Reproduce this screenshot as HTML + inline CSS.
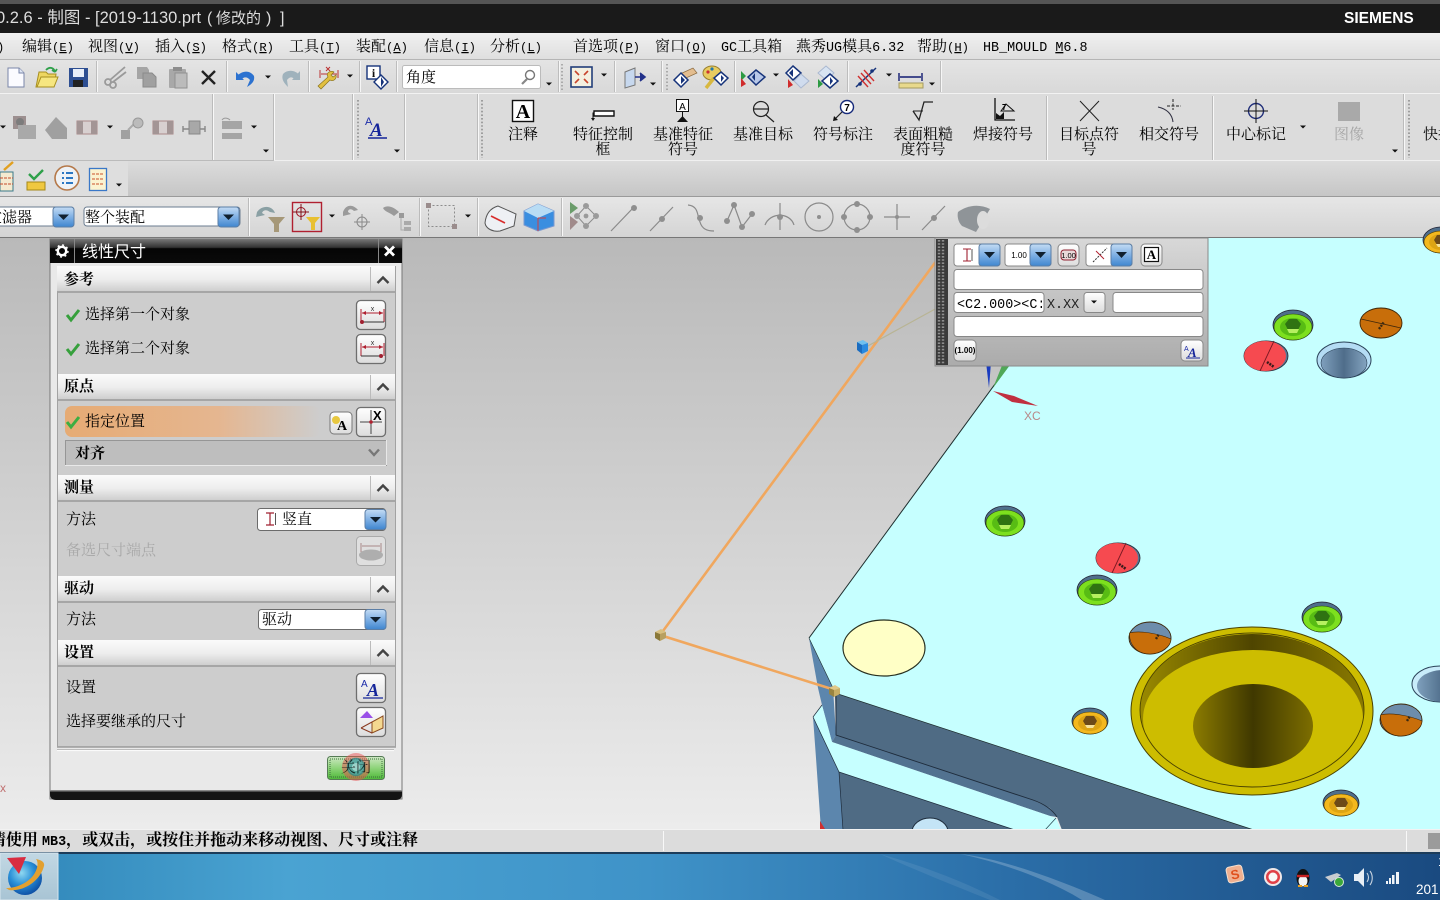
<!DOCTYPE html>
<html><head><meta charset="utf-8"><title>NX 制图</title>
<style>
html,body{margin:0;padding:0;width:1440px;height:900px;overflow:hidden;background:#ddd}
svg{display:block;position:absolute;left:0;top:0}
text{font-family:"Noto Serif CJK SC","Noto Sans CJK SC",serif;font-size:15px;fill:#000}
.l{font-family:"Liberation Mono",monospace;font-size:12.2px}
.l2{font-family:"Liberation Mono",monospace;font-size:13.4px}
.u{text-decoration:underline}
.c{text-anchor:middle}
.b{font-weight:700}
</style></head><body>
<svg width="1440" height="900" viewBox="0 0 1440 900" xmlns="http://www.w3.org/2000/svg">
<defs>
<linearGradient id="vp" x1="0" y1="0" x2="0" y2="1"><stop offset="0" stop-color="#b9b9b9"/><stop offset=".45" stop-color="#d0d0d0"/><stop offset="1" stop-color="#ececec"/></linearGradient>
<linearGradient id="menu" x1="0" y1="0" x2="0" y2="1"><stop offset="0" stop-color="#f0f0f0"/><stop offset="1" stop-color="#dedede"/></linearGradient>
<linearGradient id="r1" x1="0" y1="0" x2="0" y2="1"><stop offset="0" stop-color="#e4e4e4"/><stop offset="1" stop-color="#d8d8d8"/></linearGradient>
<linearGradient id="r3" x1="0" y1="0" x2="0" y2="1"><stop offset="0" stop-color="#dcdcdc"/><stop offset="1" stop-color="#c6c6c6"/></linearGradient>
<linearGradient id="r4" x1="0" y1="0" x2="0" y2="1"><stop offset="0" stop-color="#e6e6e6"/><stop offset="1" stop-color="#d4d4d4"/></linearGradient>
<linearGradient id="tb" x1="0" y1="0" x2="0" y2="1"><stop offset="0" stop-color="#777"/><stop offset=".35" stop-color="#333"/><stop offset=".4" stop-color="#050505"/><stop offset="1" stop-color="#0a0a0a"/></linearGradient>
<linearGradient id="hd" x1="0" y1="0" x2="0" y2="1"><stop offset="0" stop-color="#fbfbfb"/><stop offset=".5" stop-color="#eeeeee"/><stop offset="1" stop-color="#cccccc"/></linearGradient>
<linearGradient id="blue" x1="0" y1="0" x2="0" y2="1"><stop offset="0" stop-color="#c4dcf4"/><stop offset=".5" stop-color="#7fb0e4"/><stop offset="1" stop-color="#3f86cf"/></linearGradient>
<linearGradient id="bt" x1="0" y1="0" x2="0" y2="1"><stop offset="0" stop-color="#ffffff"/><stop offset="1" stop-color="#dcdcdc"/></linearGradient>
<linearGradient id="org" x1="0" y1="0" x2="1" y2="0"><stop offset="0" stop-color="#e6ab74"/><stop offset=".6" stop-color="#e5b690"/><stop offset="1" stop-color="#cdcdcd"/></linearGradient>
<linearGradient id="pop" x1="0" y1="0" x2="0" y2="1"><stop offset="0" stop-color="#d8d8d8"/><stop offset="1" stop-color="#ababab"/></linearGradient>
<linearGradient id="grn" x1="0" y1="0" x2="0" y2="1"><stop offset="0" stop-color="#cfe8c4"/><stop offset=".5" stop-color="#8ed47a"/><stop offset="1" stop-color="#4db838"/></linearGradient>
<linearGradient id="hole" x1="0" y1="0" x2="1" y2="0"><stop offset="0" stop-color="#8c7c00"/><stop offset=".5" stop-color="#3f3800"/><stop offset="1" stop-color="#7d6e00"/></linearGradient>
<linearGradient id="cres" x1="0" y1="0" x2="1" y2="0"><stop offset="0" stop-color="#9a8a00"/><stop offset=".5" stop-color="#4f4500"/><stop offset="1" stop-color="#8a7a00"/></linearGradient>
<linearGradient id="bh" x1="0" y1="0" x2="1" y2="0"><stop offset="0" stop-color="#7fa0bd"/><stop offset=".5" stop-color="#4f6d8a"/><stop offset="1" stop-color="#84a4c0"/></linearGradient>
<linearGradient id="task" x1="0" y1="0" x2="1" y2="0"><stop offset="0" stop-color="#2f86b8"/><stop offset=".2" stop-color="#4aa3d2"/><stop offset=".45" stop-color="#3f93c8"/><stop offset=".7" stop-color="#2b6ea8"/><stop offset="1" stop-color="#1a4a80"/></linearGradient>
<linearGradient id="start" x1="0" y1="0" x2="0" y2="1"><stop offset="0" stop-color="#c2d8e4"/><stop offset="1" stop-color="#a8c4d4"/></linearGradient>
<radialGradient id="globe" cx=".4" cy=".35" r=".7"><stop offset="0" stop-color="#8fd8f0"/><stop offset=".5" stop-color="#2a90d8"/><stop offset="1" stop-color="#0b4aa0"/></radialGradient>

<g id="da"><path d="M-3 -1.5H3L0 1.5Z" fill="#111"/></g>
<g id="cb"><rect width="21" height="20" rx="3" fill="url(#blue)" stroke="#5b7ea6"/><path d="M5 7.5H16L10.5 13Z" fill="#10202f"/></g>
<g id="dbtn"><rect x=".5" y=".5" width="29" height="29" rx="4" fill="url(#bt)" stroke="#6e6e6e" stroke-width="1.3"/></g>
<g id="chev"><path d="M-5.5 3L0 -2.5 5.5 3" fill="none" stroke="#444" stroke-width="2.4"/></g>

<g id="sgreen"><ellipse rx="20" ry="15" fill="#4f6f8c" stroke="#223" stroke-width=".8"/><ellipse cy="2" rx="19" ry="13" fill="#7de01e" stroke="#2c4a10" stroke-width=".6"/><ellipse cy="2" rx="13" ry="9" fill="#58bc14"/><path d="M-8 -1L-4 -6H4L8 -1 5 5H-5Z" fill="#2f7312"/><path d="M-6 4H6L4 8H-4Z" fill="#b6f060"/></g>
<g id="syellow"><ellipse rx="18" ry="13" fill="#4f6f8c" stroke="#223" stroke-width=".8"/><ellipse cy="2" rx="17" ry="11" fill="#f4b81e" stroke="#5a4400" stroke-width=".6"/><ellipse cy="2" rx="12" ry="8" fill="#dda414"/><path d="M-7 0L-4 -5H4L7 0 4 5H-4Z" fill="#6d4a18"/><path d="M-5 4H5L3 7H-3Z" fill="#f6e29a"/></g>
<g id="sorange"><ellipse rx="21" ry="15" fill="#c86e0a" stroke="#3d2608" stroke-width=".9"/><path d="M-20 -4L20 5" stroke="#41280a" stroke-width=".8"/><path d="M-2 6L3 -1" stroke="#3c2a12" stroke-width="2.4" stroke-dasharray="2 1"/></g>
<g id="sorange2"><ellipse rx="21" ry="16" fill="#6d8dac" stroke="#3d2608" stroke-width=".9"/><path d="M-20.500 -5C-10 -8 10 -4 21 1 21 9 10 16 0 16 -14 16 -21 6 -20.500 -5Z" fill="#c86e0a" stroke="#3d2608" stroke-width=".6"/><path d="M6 1L9 -4" stroke="#3c2a12" stroke-width="2.400" stroke-dasharray="2 1"/></g>
<g id="sred"><ellipse rx="22" ry="15" fill="#567894" stroke="#2a3240" stroke-width=".9"/><ellipse cx="-1" rx="21" ry="15" fill="#f64a50"/><path d="M-6 15L8 -15" stroke="#7a1822" stroke-width=".9"/><path d="M1 6L8 11" stroke="#3a1a1a" stroke-width="2.6" stroke-dasharray="2 1"/></g>
</defs>

<!-- base bars -->
<rect width="1440" height="4" fill="#555"/>
<rect y="4" width="1440" height="29" fill="#1a1a1a"/>
<rect y="33" width="1440" height="27" fill="url(#menu)"/>
<rect y="59" width="1440" height="1" fill="#b5b5b5"/>
<rect y="60" width="1440" height="34" fill="url(#r1)"/>
<rect y="93" width="1440" height="1" fill="#f2f2f2"/>
<rect y="94" width="1440" height="67" fill="#dcdcdc"/>
<rect y="161" width="1440" height="35" fill="url(#r3)"/>
<rect y="160" width="1440" height="1" fill="#f0f0f0"/>
<rect y="161" width="128" height="35" fill="#dedede"/>
<rect y="196" width="1440" height="1" fill="#9a9a9a"/>
<rect y="197" width="1440" height="41" fill="url(#r4)"/>

<!-- title -->
<g style="fill:#ddd">
<text x="-4" y="23" style="font-family:'Liberation Sans','Noto Sans CJK SC',sans-serif;font-size:16.5px;fill:#ddd">0.2.6 - 制图 - [2019-1130.prt</text>
<text x="207" y="23" style="font-family:'Liberation Sans',sans-serif;font-size:16px;fill:#ddd">(</text>
<text x="216" y="23" style="font-family:'Noto Sans CJK SC',sans-serif;font-size:15px;fill:#ddd">修改的</text>
<text x="266" y="23" style="font-family:'Liberation Sans',sans-serif;font-size:16px;fill:#ddd">)</text>
<text x="280" y="23" style="font-family:'Liberation Sans',sans-serif;font-size:16px;fill:#ddd">]</text>
</g>
<text x="1344" y="23" class="b" style="font-family:'Liberation Sans',sans-serif;font-size:15.5px;fill:#fff">SIEMENS</text>

<!-- menu -->
<g>
<text x="-3" y="51"><tspan class="l">)</tspan></text>
<text x="22" y="51">编辑<tspan class="l">(<tspan class="u">E</tspan>)</tspan></text>
<text x="88" y="51">视图<tspan class="l">(<tspan class="u">V</tspan>)</tspan></text>
<text x="155" y="51">插入<tspan class="l">(<tspan class="u">S</tspan>)</tspan></text>
<text x="222" y="51">格式<tspan class="l">(<tspan class="u">R</tspan>)</tspan></text>
<text x="289" y="51">工具<tspan class="l">(<tspan class="u">T</tspan>)</tspan></text>
<text x="356" y="51">装配<tspan class="l">(<tspan class="u">A</tspan>)</tspan></text>
<text x="424" y="51">信息<tspan class="l">(<tspan class="u">I</tspan>)</tspan></text>
<text x="490" y="51">分析<tspan class="l">(<tspan class="u">L</tspan>)</tspan></text>
<text x="573" y="51">首选项<tspan class="l">(<tspan class="u">P</tspan>)</tspan></text>
<text x="655" y="51">窗口<tspan class="l">(<tspan class="u">O</tspan>)</tspan></text>
<text x="721" y="51"><tspan class="l2">GC</tspan>工具箱</text>
<text x="796" y="51">燕秀<tspan class="l2">UG</tspan>模具<tspan class="l2">6.32</tspan></text>
<text x="917" y="51">帮助<tspan class="l">(<tspan class="u">H</tspan>)</tspan></text>
<text x="983" y="51"><tspan class="l2">HB_MOULD <tspan class="u">M</tspan>6.8</tspan></text>
</g>

<!-- row 1 separators -->
<g stroke="#bdbdbd"><path d="M96.5 61V92M226.5 61V92M308.5 61V92M359.5 61V92M396.5 61V92M558.5 61V92M614.5 61V92M661.5 61V92M734.5 61V92M847.5 61V92M940.5 61V92"/></g>
<g stroke="#f6f6f6"><path d="M97.5 61V92M227.5 61V92M309.5 61V92M360.5 61V92M397.5 61V92M559.5 61V92M615.5 61V92M662.5 61V92M735.5 61V92M848.5 61V92M941.5 61V92"/></g>
<!-- row 1 icons -->
<path d="M8 68H19L24 73V87H8Z" fill="#fbfbff" stroke="#7a86a8"/><path d="M19 68V73H24" fill="#dfe6f5" stroke="#7a86a8"/>
<path d="M36 87L39 72H46L48 74H56L54 87Z" fill="#eed660" stroke="#a78f20"/><path d="M37 87L41 77H58L54 87Z" fill="#f6e680" stroke="#a78f20"/><path d="M46 70C50 66 54 68 55 72M55 72L52 70M55 72L57 69" fill="none" stroke="#2fa04a" stroke-width="1.8"/>
<rect x="69" y="68" width="19" height="19" fill="#2e4f92"/><rect x="73" y="69" width="11" height="8" fill="#e8eef8"/><rect x="73" y="80" width="10" height="7" fill="#222"/>
<g fill="none" stroke="#9a9a9a" stroke-width="1.8"><circle cx="108" cy="82" r="3"/><circle cx="113" cy="85" r="3"/><path d="M110 80L125 67M113 82L126 72"/></g>
<path d="M137 67H147L149 70V79H137Z" fill="#a5a5a5"/><path d="M143 73H152L156 77V87H143Z" fill="#a0a0a0" stroke="#8a8a8a"/>
<rect x="169" y="69" width="17" height="19" rx="1" fill="#a8a8a8"/><rect x="173" y="67" width="9" height="4" fill="#8d8d8d"/><rect x="175" y="73" width="12" height="15" fill="#bbb" stroke="#909090"/>
<path d="M202 71L215 84M215 71L202 84" stroke="#222" stroke-width="2.4"/>
<path d="M236 77C242 70 250 70 254 76 255 81 252 84 247 87L250 80C247 76 243 77 241 80Z" fill="#2c72d0"/><path d="M236 72V80H244Z" fill="#2c72d0"/>
<use href="#da" x="268" y="77"/>
<path d="M300 76C296 70 288 69 283 74 281 79 284 83 288 87L287 80C290 76 293 77 295 80Z" fill="#9fb2bc"/><path d="M300 71V80H292Z" fill="#9fb2bc"/>
<g fill="none"><path d="M320 70V78M338 70V78M321 74H337" stroke="#b33" stroke-width="1"/></g><path d="M326 67L330 71M330 67L326 71" stroke="#b33"/><path d="M318 90L328 81C325 77 331 74 334 76L331 79 333 81 336 79C337 83 333 86 330 84L321 93Z" fill="#e2c040" stroke="#8a7420" stroke-width=".7" transform="translate(0,-4)"/>
<use href="#da" x="350" y="76"/>
<rect x="367" y="66" width="13" height="13" fill="#fff" stroke="#16337a" stroke-width="1.4"/><text x="373.5" y="77" class="c b" style="font-family:'Liberation Serif',serif;font-size:12px;fill:#111">i</text><path d="M381 75L388 82 381 89 374 82Z" fill="#fff" stroke="#16337a" stroke-width="1.4"/><path d="M381 77L384 82 381 87Z" fill="#16337a"/>
<rect x="402.5" y="65.5" width="138" height="23" rx="2" fill="#fff" stroke="#bbb"/>
<text x="406" y="82">角度</text>
<circle cx="530" cy="75" r="4.5" fill="#fff" stroke="#777" stroke-width="1.4"/><path d="M527 79L522 84" stroke="#888" stroke-width="2.2"/>
<use href="#da" x="549" y="84"/>
<rect x="571" y="67" width="21" height="20" fill="#f4f0e0" stroke="#223e7a" stroke-width="1.6"/><path d="M575 71L579 75M588 71L584 75M575 83L579 79M588 83L584 79" stroke="#c8452c" stroke-width="1.6"/>
<use href="#da" x="604" y="75"/>
<path d="M625 72L635 68V85L625 88Z" fill="#c7d8ee" stroke="#777"/><path d="M635 77H644M640 73L645 77 640 81" fill="#22318a" stroke="#22318a" stroke-width="1.6"/>
<use href="#da" x="653" y="84"/>
<path d="M562 64V90" stroke="#999" stroke-width="1.5" stroke-dasharray="1.5 2"/>
<path d="M667 64V90" stroke="#999" stroke-width="1.5" stroke-dasharray="1.5 2"/>
<path d="M680 74L693 68 697 73 686 78Z" fill="#e3bd8f" stroke="#8a6a40" stroke-width=".7"/><path d="M681 73L688 80 681 87 674 80Z" fill="#fff" stroke="#16337a" stroke-width="1.5"/><path d="M681 76L685 80 681 84Z" fill="#16337a"/>
<ellipse cx="712" cy="73" rx="9" ry="7" fill="#e8cc60" stroke="#9a8030"/><circle cx="708" cy="72" r="1.6" fill="#c33"/><circle cx="712" cy="69" r="1.6" fill="#27a"/><path d="M706 88L714 78" stroke="#d8b840" stroke-width="3.5"/><path d="M721 72L728 78 721 85 714 78Z" fill="#fff" stroke="#16337a" stroke-width="1.5"/><path d="M721 75L724 78 721 82Z" fill="#16337a"/>
<path d="M741 71L746 76 741 81Z" fill="#2c9a42"/><path d="M741 78L746 84 741 87Z" fill="#d02c2c"/><path d="M756 70L765 77 756 85 748 77Z" fill="#b8c8e8" stroke="#16337a" stroke-width="1.5"/><path d="M755 73L752 77 755 81Z" fill="#16337a"/>
<use href="#da" x="776" y="75"/>
<path d="M793 66L801 73 793 80 786 73Z" fill="#fff" stroke="#16337a" stroke-width="1.5"/><path d="M793 69L789 73 793 77Z" fill="#16337a"/><path d="M788 79L793 85 788 88Z" fill="#d02c2c"/><path d="M801 74L809 81 801 88 794 81Z" fill="#d0dcee" stroke="#aab8d0"/>
<path d="M826 66L834 73 826 80 818 73Z" fill="#d8e4f2" stroke="#aab8d0"/><path d="M818 79L823 84 818 88Z" fill="#2c9a42"/><path d="M830 74L838 81 830 88 822 81Z" fill="#fff" stroke="#16337a" stroke-width="1.5"/><path d="M830 77L833 81 830 85Z" fill="#16337a"/>
<path d="M856 87L876 68" stroke="#16337a" stroke-width="1.5"/><circle cx="860" cy="84" r="1.8" fill="#16337a"/><circle cx="872" cy="71" r="1.8" fill="#16337a"/><path d="M858 76L868 87M861 73L871 84M864 70L874 81" stroke="#d03030" stroke-width="1.4"/>
<use href="#da" x="889" y="75"/>
<path d="M899 73V81M922 73V81M900 77H921" stroke="#111a70" stroke-width="1.4"/><rect x="899" y="83" width="24" height="5" fill="#e8d98c" stroke="#a59a60"/>
<use href="#da" x="932" y="84"/>

<!-- row 2 -->
<g stroke="#bbb"><path d="M212.5 94V160M273.5 94V160M352.5 94V160M404.5 94V160M477.5 94V160M1046.5 96V160M1212.5 96V160M1403.5 94V160"/></g>
<g stroke="#f8f8f8"><path d="M213.5 94V160M274.5 94V160M353.5 94V160M405.5 94V160M478.5 94V160M1047.5 96V160M1213.5 96V160M1404.5 94V160"/></g>
<path d="M358 100V158M482 100V158M1409 100V158" stroke="#8f8f8f" stroke-width="1.6" stroke-dasharray="1.6 2"/>
<rect y="160" width="274" height="1" fill="#bbb"/>
<use href="#da" x="3" y="127"/>
<rect x="13" y="116" width="13" height="13" fill="#9c8f8f"/><circle cx="20" cy="122" r="4" fill="#7c7c7c"/><rect x="18" y="125" width="18" height="14" fill="#a9a9a9"/>
<path d="M45 130L56 117 67 128V139H52Z" fill="#a0a0a0"/>
<rect x="77" y="121" width="20" height="13" fill="#d8d0d0" stroke="#a88"/><path d="M77 121H83V134H77ZM91 121H97V134H91Z" fill="#a39595"/>
<use href="#da" x="110" y="127"/>
<rect x="121" y="130" width="9" height="9" fill="#a0a0a0"/><path d="M128 130L136 122" stroke="#aaa" stroke-width="2"/><circle cx="138" cy="123" r="5" fill="#bbb" stroke="#999"/>
<rect x="153" y="121" width="20" height="13" fill="#d8d0d0" stroke="#a88"/><path d="M153 121H159V134H153ZM167 121H173V134H167Z" fill="#a39595"/>
<rect x="189" y="121" width="11" height="13" fill="#a8a8a8" stroke="#888"/><path d="M183 132V126M205 132V126M183 129H189M200 129H205" stroke="#888" stroke-width="1.4"/>
<rect x="222" y="121" width="20" height="8" fill="#a5a5a5"/><rect x="222" y="133" width="20" height="6" fill="#a5a5a5"/><path d="M222 120C224 117 228 118 230 120" fill="none" stroke="#999"/>
<use href="#da" x="254" y="127"/>
<use href="#da" x="266" y="151"/>
<text x="365" y="125" style="font-family:'Liberation Sans',sans-serif;font-size:11px;fill:#1a2aa8">A</text>
<text x="370" y="136" class="b" style="font-family:'Liberation Serif',serif;font-size:19px;font-style:italic;fill:#15259a">A</text><path d="M368 138H387" stroke="#15259a" stroke-width="1.4"/>
<use href="#da" x="397" y="151"/>

<!-- labels -->
<text x="523" y="139" class="c">注释</text>
<text x="603" y="139" class="c">特征控制</text><text x="603" y="154" class="c">框</text>
<text x="683" y="139" class="c">基准特征</text><text x="683" y="154" class="c">符号</text>
<text x="763" y="139" class="c">基准目标</text>
<text x="843" y="139" class="c">符号标注</text>
<text x="923" y="139" class="c">表面粗糙</text><text x="923" y="154" class="c">度符号</text>
<text x="1003" y="139" class="c">焊接符号</text>
<text x="1089" y="139" class="c">目标点符</text><text x="1089" y="154" class="c">号</text>
<text x="1169" y="139" class="c">相交符号</text>
<text x="1256" y="139" class="c">中心标记</text>
<text x="1349" y="139" class="c" style="fill:#a6a6a6">图像</text>
<text x="1423" y="139">快捷</text>
<!-- ribbon icons -->
<rect x="512.5" y="100.5" width="21" height="21" fill="#fff" stroke="#111" stroke-width="1.4"/><text x="523" y="118" class="c b" style="font-family:'Liberation Serif',serif;font-size:20px">A</text>
<path d="M594 111H614V116H594Z" fill="#fff" stroke="#111" stroke-width="1.4"/><path d="M594 113H593V119" fill="none" stroke="#111"/><path d="M591 118H595L593 121Z" fill="#111"/>
<rect x="676.5" y="99.5" width="12" height="12" fill="#fff" stroke="#111"/><text x="682.5" y="110" class="c" style="font-family:'Liberation Sans',sans-serif;font-size:10px">A</text><path d="M682.5 112V118" stroke="#111"/><path d="M677 122H688L682.5 116Z" fill="#111"/>
<circle cx="761" cy="109" r="7.5" fill="none" stroke="#222" stroke-width="1.2"/><path d="M753.5 109H768.5M766 115L774 122" stroke="#222" stroke-width="1.2"/>
<circle cx="847" cy="107" r="6.5" fill="#fff" stroke="#162a7a" stroke-width="1.4"/><text x="847" y="111" class="c b" style="font-family:'Liberation Sans',sans-serif;font-size:10px">7</text><path d="M842 112L834 120" stroke="#222" stroke-width="1.2"/><path d="M833 121L834 116 838 120Z" fill="#111"/>
<path d="M913 111L919 120 924 102H933" fill="none" stroke="#222" stroke-width="1.3"/><path d="M913 111H923" stroke="#222"/>
<path d="M995 98V120H1015" fill="none" stroke="#111" stroke-width="1.3"/><path d="M996 119V113L1000 116 1004 112V119Z" fill="#111"/><path d="M1001 111L1006 104 1014 111Z" fill="none" stroke="#111"/><text x="1002" y="110" style="font-family:'Liberation Sans',sans-serif;font-size:8px" class="b">7</text>
<path d="M1080 101L1099 121M1099 101L1080 121" stroke="#222" stroke-width="1"/>
<path d="M1158 107C1167 109 1172 114 1173 122" fill="none" stroke="#334" stroke-width="1.1"/><path d="M1173 99V110M1167 106H1181" stroke="#222" stroke-dasharray="3 1.5"/>
<circle cx="1256" cy="111" r="7.5" fill="none" stroke="#22307a" stroke-width="1.4"/><path d="M1256 99V123M1244 111H1268" stroke="#111"/>
<use href="#da" x="1303" y="127"/>
<rect x="1338" y="102" width="22" height="19" fill="#a9a9a9"/>
<use href="#da" x="1395" y="151"/>

<!-- row 3 -->
<path d="M0 172H13V191H0Z" fill="#f4ead0" stroke="#3a7a8a"/><path d="M0 178H13M0 184H13" stroke="#c5492a" stroke-dasharray="3 1"/><path d="M4 170L13 162" stroke="#e1a020" stroke-width="2.4"/>
<rect x="27" y="182" width="18" height="8" fill="#f0c840" stroke="#a58818"/><path d="M29 174L34 179 43 170" fill="none" stroke="#2ea04a" stroke-width="2.4"/>
<circle cx="67" cy="178" r="12" fill="#eef2f6" stroke="#b5794a" stroke-width="1.6"/><path d="M62 173H73M62 178H73M62 183H73" stroke="#2c78c4" stroke-width="2" stroke-dasharray="2 2 8"/>
<rect x="89.5" y="168.5" width="17" height="22" fill="#fbf3d0" stroke="#3a78c8" stroke-width="1.3"/><path d="M92 174H104M92 179H104M92 184H104" stroke="#c8502a" stroke-dasharray="3 1"/>
<use href="#da" x="119" y="185"/>

<!-- row 4 -->
<rect x="-6" y="207" width="80" height="19" rx="3" fill="#fff" stroke="#6b7c90"/>
<text x="-13" y="222">过滤器</text>
<use href="#cb" x="53" y="207"/>
<rect x="84" y="207" width="156" height="19" rx="3" fill="#fff" stroke="#6b7c90"/>
<text x="85" y="222">整个装配</text>
<use href="#cb" x="218" y="207"/>
<path d="M248.5 198V236" stroke="#bbb"/><path d="M249.5 198V236" stroke="#f8f8f8"/>
<path d="M257 212C262 205 272 205 275 213L270 212C266 209 263 210 262 213L265 215 256 217Z" fill="#8aa0a4"/><path d="M268 217H285L279 224V232H274V224Z" fill="#a69878"/>
<rect x="292.5" y="202.5" width="29" height="29" fill="none" stroke="#b02030" stroke-width="1.4"/><circle cx="301" cy="212" r="4.5" fill="none" stroke="#a01020"/><path d="M301 204V220M293 212H309" stroke="#801018"/><path d="M306 217H320L315 223V230H311V223Z" fill="#e8c030"/>
<use href="#da" x="332" y="216"/>
<path d="M343 212C346 204 353 204 358 210L354 211C351 208 348 209 348 212L351 214 343 216Z" fill="#9a9a9a"/><circle cx="362" cy="222" r="5" fill="none" stroke="#8a8a8a"/><path d="M362 214V230M354 222H370" stroke="#8a8a8a"/>
<path d="M383 208C388 204 395 208 399 212L394 216C389 212 385 212 383 208Z" fill="#9a9a9a"/><path d="M401 215V230H411" fill="none" stroke="#aaa"/><rect x="399" y="213" width="5" height="5" fill="#9a9a9a"/><rect x="404" y="221" width="7" height="4" fill="#aaa"/><rect x="404" y="227" width="7" height="4" fill="#aaa"/>
<path d="M419.5 198V236M477.5 198V236M561.5 198V236" stroke="#bbb"/><path d="M420.5 198V236M478.5 198V236M562.5 198V236" stroke="#f8f8f8"/>
<rect x="428.5" y="205.5" width="26" height="21" fill="none" stroke="#8c8c8c" stroke-dasharray="2 2"/><rect x="426" y="203" width="5" height="5" fill="#9a8c8c"/><rect x="452" y="224" width="5" height="5" fill="#9a8c8c"/>
<use href="#da" x="468" y="216"/>
<path d="M485 223C486 213 491 208 498 206L516 214 514 226 500 231C493 232 486 229 485 223Z" fill="#eef0f4" stroke="#555"/><path d="M491 216L505 223" stroke="#d82c2c" stroke-width="1.6"/>
<path d="M524 211L538 204 554 211 554 226 538 231 524 225Z" fill="#3a8ee0" stroke="#7a99d0"/><path d="M524 211L538 218 554 211 538 204Z" fill="#b8dcf4"/><path d="M538 218V231" stroke="#d04040"/><path d="M538 218H546" stroke="#d04040"/>
<path d="M570 202L578 208 570 214Z" fill="#6a9c6a"/><path d="M570 216L578 222 570 230Z" fill="#a08a8a"/>
<g fill="none" stroke="#8c8c8c"><path d="M577 216L586 206 596 216 586 226Z"/></g><g fill="#9a9a9a"><circle cx="586" cy="206" r="3"/><circle cx="586" cy="226" r="3"/><circle cx="577" cy="216" r="3"/><circle cx="596" cy="216" r="3"/><circle cx="586" cy="216" r="2.4"/></g>
<g fill="none" stroke="#8a8a8a" stroke-width="1.2">
<path d="M611 231L634 207"/><path d="M650 231L673 207"/><path d="M688 205C699 206 697 216 700 222 702 229 707 231 714 231"/><path d="M727 221L734 205 742 227 752 214"/><path d="M765 225C770 212 790 212 794 225M780 203V230"/>
<circle cx="819" cy="217" r="14"/><circle cx="857" cy="217" r="13"/><path d="M884 217H910M897 204V230"/><path d="M922 230L945 206"/>
</g>
<g fill="#8f8f8f"><circle cx="634" cy="208" r="3"/><circle cx="662" cy="219" r="3"/><circle cx="700" cy="218" r="3"/><circle cx="734" cy="205" r="3"/><circle cx="727" cy="221" r="3"/><circle cx="742" cy="227" r="3"/><circle cx="752" cy="214" r="3"/><circle cx="780" cy="217" r="3"/><circle cx="819" cy="217" r="2"/><circle cx="857" cy="204" r="3"/><circle cx="857" cy="230" r="3"/><circle cx="844" cy="217" r="3"/><circle cx="870" cy="217" r="3"/><circle cx="897" cy="217" r="2"/><circle cx="934" cy="218" r="3"/></g>
<path d="M958 212C966 206 978 203 990 209L976 232 962 226C958 222 957 216 958 212Z" fill="#8f9498"/><ellipse cx="983" cy="220" rx="6" ry="9" fill="#dcdcdc"/>

<!-- viewport -->
<rect y="238" width="1440" height="592" fill="url(#vp)"/>
<rect y="237" width="1440" height="1" fill="#777"/>
<!-- plate top -->
<path d="M809 638L1102 238H1440V830H1254L835 693Z" fill="#c6ffff"/>
<!-- upper dark face -->
<path d="M835 693L1254 830H1062L1057 817 1050 808 1033 800 836 735Z" fill="#4f6b84"/>
<path d="M809 638L833 688 836 735 832 742 822 705 818 688Z" fill="#5c86ad"/>
<path d="M836 735L1033 800 1050 808 1057 817 1050 816 832 742Z" fill="#527290"/>
<path d="M836 693V735L1033 800Q1050 806 1057 817" fill="none" stroke="#1e2c3c" stroke-width=".9"/>
<!-- lower cyan + faces -->
<path d="M813 717L822 705 832 742 1050 816 1056 818 1061 830H1015L839 772Z" fill="#c6ffff"/>
<path d="M813 717L839 772 843 830H821L816 758Z" fill="#5c86ad"/>
<path d="M839 772L1015 830H843Z" fill="#4f6b84"/>
<path d="M813 717L839 772 843 830M839 772L1015 830M813 717L822 705" fill="none" stroke="#1e2c3c" stroke-width=".7"/>
<path d="M1045 830L1056 818" stroke="#24404c" stroke-width=".7"/>
<path d="M820 821L825 829H820Z" fill="#d03030"/>
<ellipse cx="930" cy="832" rx="18" ry="14" fill="#c4e4f6" stroke="#1e2c3c"/>
<path d="M809 638L1102 238" stroke="#1d2d2d" stroke-width="1"/>
<path d="M809 638L833 688" stroke="#1d2d2d" stroke-width=".6"/>
<path d="M835 693L1254 830" stroke="#1d2d2d" stroke-width=".7"/>

<!-- features -->
<ellipse cx="884" cy="648" rx="41" ry="28" fill="#ffffc6" stroke="#283020" stroke-width="1.2"/>
<ellipse cx="1252" cy="711" rx="121" ry="84" fill="#cdbd00" stroke="#4a4200"/>
<ellipse cx="1252" cy="710" rx="112" ry="76" fill="url(#cres)"/>
<ellipse cx="1253" cy="719" rx="110" ry="69" fill="#cdbd00"/>
<ellipse cx="1252" cy="710" rx="112" ry="77" fill="none" stroke="#4a4200" stroke-width=".9"/>
<ellipse cx="1253" cy="726" rx="60" ry="42" fill="url(#hole)"/>
<use href="#sgreen" x="1293" y="325"/>
<use href="#sgreen" x="1005" y="521"/>
<use href="#sgreen" x="1097" y="590"/>
<use href="#sgreen" x="1322" y="617"/>
<use href="#sred" x="1266" y="356"/>
<use href="#sred" x="1118" y="558"/>
<use href="#sorange" x="1381" y="323"/>
<use href="#sorange2" x="1150" y="638"/>
<use href="#sorange2" x="1401" y="720"/>
<use href="#syellow" x="1090" y="721"/>
<use href="#syellow" x="1341" y="803"/>
<use href="#syellow" x="1441" y="240"/>
<ellipse cx="1344" cy="360" rx="27" ry="18" fill="#b4dcf4" stroke="#2a4258"/><ellipse cx="1344" cy="363" rx="23" ry="15" fill="url(#bh)" stroke="#2a4258" stroke-width=".6"/>
<ellipse cx="1440" cy="684" rx="28" ry="18" fill="#c8ecfa" stroke="#2a4258"/><ellipse cx="1443" cy="686" rx="26" ry="16" fill="url(#bh)"/>

<!-- orange lines -->
<path d="M937 260L660 635 835 690" fill="none" stroke="#f0a75e" stroke-width="2.6"/>
<path d="M866 347L937 308" stroke="#b8b494" stroke-width="1.2"/>
<path d="M857 342L863 340 868 343 862 345Z" fill="#6ec0f0"/><path d="M857 342L862 345V354L857 350Z" fill="#1a6cc0"/><path d="M862 345L868 343V351L862 354Z" fill="#2a8ae0"/>
<path d="M655 632L661 629 666 632 660 634Z" fill="#d8c080"/><path d="M655 632L660 634V641L655 638Z" fill="#8a7838"/><path d="M660 634L666 632V638L660 641Z" fill="#b8a060"/>
<path d="M829 688L835 685 840 688 834 690Z" fill="#e0c888"/><path d="M829 688L834 690V697L829 694Z" fill="#9a8440"/><path d="M834 690L840 688V694L834 697Z" fill="#c8ae64"/>
<!-- triad -->
<path d="M986 362H991L989 388Z" fill="#1a3cc0"/>
<path d="M1003 363L1010 365 993 388Z" fill="#50a858"/>
<path d="M993 391L1014 396 1038 406 1012 402Z" fill="#c03040"/>
<text x="1024" y="420" style="font-family:'Liberation Sans',sans-serif;font-size:12px;fill:#b88888">XC</text>
<text x="0" y="792" style="font-family:'Liberation Sans',sans-serif;font-size:12px;fill:#c07070">x</text>

<!-- floating popup -->
<rect x="935" y="238" width="273" height="128" fill="url(#pop)" stroke="#8a8a8a"/>
<rect x="936" y="239" width="12" height="126" fill="#3a3a3a"/>
<path d="M939 240V364M943 240V364" stroke="#8d8d8d" stroke-width="2.4" stroke-dasharray="1.6 1.6"/>
<rect x="954" y="244" width="46" height="22" rx="3" fill="#fff" stroke="#888"/><rect x="979" y="244" width="21" height="22" rx="3" fill="url(#blue)" stroke="#5b7ea6"/><path d="M984 252H995L989.5 258Z" fill="#10202f"/>
<path d="M963 249H971M967 249V261M963 261H971" stroke="#a02030" stroke-width="1.1"/><path d="M972 249V261" stroke="#555"/>
<rect x="1005" y="244" width="46" height="22" rx="3" fill="#fff" stroke="#888"/><rect x="1030" y="244" width="21" height="22" rx="3" fill="url(#blue)" stroke="#5b7ea6"/><path d="M1035 252H1046L1040.5 258Z" fill="#10202f"/>
<text x="1019" y="258" class="c" style="font-family:'Liberation Sans',sans-serif;font-size:8px">1.00</text>
<rect x="1058" y="244" width="21" height="22" rx="4" fill="url(#bt)" stroke="#888"/><rect x="1061" y="250" width="15" height="10" rx="3" fill="#e8d8d8" stroke="#902030"/><text x="1068.5" y="258" class="c" style="font-family:'Liberation Sans',sans-serif;font-size:7.5px">1.00</text>
<rect x="1086" y="244" width="46" height="22" rx="3" fill="#fff" stroke="#888"/><rect x="1111" y="244" width="21" height="22" rx="3" fill="url(#blue)" stroke="#5b7ea6"/><path d="M1116 252H1127L1121.5 258Z" fill="#10202f"/>
<path d="M1093 262L1107 248" stroke="#333" stroke-dasharray="2 1.2"/><path d="M1096 251L1104 259" stroke="#b02030"/>
<rect x="1141" y="244" width="21" height="22" rx="4" fill="url(#bt)" stroke="#888"/><rect x="1144.5" y="247.5" width="14" height="14" fill="#fff" stroke="#111" stroke-width="1.2"/><text x="1151.5" y="259" class="c b" style="font-family:'Liberation Serif',serif;font-size:13px">A</text>
<rect x="954" y="269.5" width="249" height="20" rx="3" fill="#fff" stroke="#888"/>
<rect x="954" y="292.5" width="90" height="20" rx="3" fill="#fff" stroke="#888"/>
<svg x="955" y="293" width="87" height="20"><text x="2" y="15" style="font-family:'Liberation Mono',monospace;font-size:13.4px">&lt;C2.000&gt;&lt;C:</text></svg>
<text x="1047" y="308" style="font-family:'Liberation Mono',monospace;font-size:13.4px;fill:#222">X.XX</text>
<rect x="1084" y="292.5" width="21" height="20" rx="3" fill="url(#bt)" stroke="#888"/><use href="#da" x="1094" y="302"/>
<rect x="1113" y="292.5" width="90" height="20" rx="3" fill="#fff" stroke="#888"/>
<rect x="954" y="316.5" width="249" height="20" rx="3" fill="#fff" stroke="#888"/>
<rect x="954" y="340" width="22" height="21" rx="4" fill="url(#bt)" stroke="#888"/><text x="965" y="353" class="c b" style="font-family:'Liberation Sans',sans-serif;font-size:8px">(1.00)</text>
<rect x="1181" y="340" width="22" height="21" rx="4" fill="url(#bt)" stroke="#888"/><text x="1184" y="351" style="font-family:'Liberation Sans',sans-serif;font-size:7px;fill:#1a2aa8">A</text><text x="1188" y="357" class="b" style="font-family:'Liberation Serif',serif;font-size:13px;font-style:italic;fill:#15259a">A</text><path d="M1186 358H1200" stroke="#15259a"/>

<!-- dialog -->
<rect x="50" y="239" width="352" height="560" fill="#e9e9e9" stroke="#777"/>
<rect x="50" y="239" width="352" height="24" fill="url(#tb)"/>
<path d="M74.5 239V263M378.5 239V263" stroke="#888"/>
<circle cx="62" cy="251" r="4.2" fill="none" stroke="#fff" stroke-width="2.4"/><circle cx="62" cy="251" r="6" fill="none" stroke="#fff" stroke-width="1.4" stroke-dasharray="2 2.7"/>
<text x="82" y="257" style="font-size:16px;fill:#fff;font-family:'Noto Sans CJK SC',sans-serif">线性尺寸</text>
<path d="M385 246.5L394 255.5M394 246.5L385 255.5" stroke="#fff" stroke-width="2.8"/>

<!-- sections -->
<g fill="url(#hd)"><rect x="57" y="266" width="339" height="26"/><rect x="57" y="374" width="339" height="26"/><rect x="57" y="475" width="339" height="26"/><rect x="57" y="576" width="339" height="26"/><rect x="57" y="640" width="339" height="26"/></g>
<g fill="#cdcdcd"><rect x="57" y="292" width="339" height="82"/><rect x="57" y="400" width="339" height="75"/><rect x="57" y="501" width="339" height="75"/><rect x="57" y="602" width="339" height="38"/><rect x="57" y="666" width="339" height="81"/></g>
<g stroke="#8f8f8f" stroke-width="1.2"><path d="M57 292H396M57 400H396M57 501H396M57 602H396M57 666H396M57 747H396"/></g>
<path d="M57.5 292V747M395.5 266V747" stroke="#a2a2a2"/>
<path d="M370.5 267V291M370.5 375V399M370.5 476V500M370.5 577V601M370.5 641V665" stroke="#bbb"/>
<text x="64" y="284" class="b">参考</text><text x="64" y="391" class="b">原点</text><text x="64" y="492" class="b">测量</text><text x="64" y="593" class="b">驱动</text><text x="64" y="657" class="b">设置</text>
<use href="#chev" x="383" y="280"/><use href="#chev" x="383" y="387"/><use href="#chev" x="383" y="488"/><use href="#chev" x="383" y="589"/><use href="#chev" x="383" y="653"/>

<path d="M67 315L71 320 79 310" fill="none" stroke="#36a03c" stroke-width="3"/>
<text x="85" y="319">选择第一个对象</text>
<use href="#dbtn" x="356" y="300"/>
<path d="M361 309V322M384 309V322M362 313H383" fill="none" stroke="#b02030"/><path d="M362 313L366 311V315ZM383 313L379 311V315Z" fill="#b02030"/><text x="372.5" y="311" class="c" style="font-family:'Liberation Sans',sans-serif;font-size:7px;fill:#333">x</text><path d="M364 322H384" stroke="#333"/><circle cx="362" cy="322" r="2" fill="#a02030"/>
<path d="M67 349L71 354 79 344" fill="none" stroke="#36a03c" stroke-width="3"/>
<text x="85" y="353">选择第二个对象</text>
<use href="#dbtn" x="356" y="334"/>
<path d="M361 343V356M384 343V356M362 347H383" fill="none" stroke="#b02030"/><path d="M362 347L366 345V349ZM383 347L379 345V349Z" fill="#b02030"/><text x="372.5" y="345" class="c" style="font-family:'Liberation Sans',sans-serif;font-size:7px;fill:#333">x</text><path d="M361 356H381" stroke="#333"/><circle cx="381" cy="356" r="2" fill="#a02030"/>

<rect x="65" y="406" width="255" height="31" rx="7" fill="url(#org)"/>
<path d="M67 422L71 427 79 417" fill="none" stroke="#3cae42" stroke-width="3"/>
<text x="85" y="426">指定位置</text>
<rect x="330" y="412" width="22" height="22" rx="4" fill="url(#bt)" stroke="#777"/><circle cx="336" cy="420" r="4" fill="#e8c840"/><text x="337" y="430" class="b" style="font-family:'Liberation Serif',serif;font-size:14px">A</text>
<use href="#dbtn" x="356" y="407"/>
<path d="M360 422H382M371 410V434" stroke="#444"/><circle cx="371" cy="422" r="1.8" fill="#b02030"/><text x="373" y="420" class="b" style="font-family:'Liberation Sans',sans-serif;font-size:13px">X</text>
<rect x="65.5" y="440.5" width="321" height="25" fill="#bebebe" stroke="#8a8a8a" stroke-width=".8"/><path d="M65 465.5H386M386.5 440V465" stroke="#e8e8e8"/>
<text x="75" y="458" class="b">对齐</text>
<path d="M369 449.5L374 455 379 449.5" fill="none" stroke="#777" stroke-width="2.4"/>

<text x="66" y="524">方法</text>
<rect x="257.5" y="508.5" width="128" height="22" rx="3" fill="#fff" stroke="#6b6b6b"/><use href="#cb" x="365" y="509.5"/>
<path d="M266 513H274M270 513V525M266 525H274" stroke="#a02030" stroke-width="1.2"/><path d="M275.5 513V525" stroke="#555"/>
<text x="282" y="524">竖直</text>
<text x="66" y="555" style="fill:#a8a8a8">备选尺寸端点</text>
<rect x="356.5" y="536.5" width="29" height="29" rx="4" fill="#dfdfdf" stroke="#aaa"/><ellipse cx="371" cy="555" rx="12" ry="5.5" fill="#aeaeae"/><path d="M361 543V552M381 543V552M362 546H380" stroke="#a88" fill="none"/>

<text x="66" y="624">方法</text>
<rect x="258.5" y="609.5" width="127" height="20" rx="3" fill="#fff" stroke="#6b6b6b"/><use href="#cb" x="365" y="609.5"/>
<text x="262" y="624">驱动</text>

<text x="66" y="692">设置</text>
<use href="#dbtn" x="356" y="673"/>
<text x="361" y="687" style="font-family:'Liberation Sans',sans-serif;font-size:10px;fill:#1a2aa8">A</text><text x="367" y="696" class="b" style="font-family:'Liberation Serif',serif;font-size:18px;font-style:italic;fill:#15259a">A</text><path d="M363 698H383" stroke="#15259a" stroke-width="1.3"/>
<text x="66" y="726">选择要继承的尺寸</text>
<use href="#dbtn" x="356" y="707"/>
<path d="M360 718L367 711 373 718Z" fill="#9a50e8"/><path d="M372 722L383 716V728L372 733Z" fill="#f4d890" stroke="#8a4a20"/><path d="M361 728L372 722M361 728L372 733" stroke="#8a3a20" fill="none"/>

<path d="M57 750.5H394" stroke="#fafafa" stroke-width="1.2"/><path d="M57 749.5H394" stroke="#bbb"/>
<rect x="327.5" y="756.5" width="57" height="23" rx="3" fill="url(#grn)" stroke="#557a55"/>
<rect x="330" y="759" width="52" height="18" fill="none" stroke="#3d6d3d" stroke-dasharray="1 1"/>
<circle cx="356" cy="767" r="14" fill="#e85050" opacity=".5"/>
<circle cx="356" cy="767" r="8.5" fill="#35b0b0" opacity=".75" stroke="#2a8a8a" stroke-width="1.5"/><circle cx="356" cy="767" r="4" fill="#c9f0e8" opacity=".6"/>
<text x="356" y="772" class="c" style="opacity:.75">关闭</text>
<path d="M50 791H402V794Q402 800 396 800H56Q50 800 50 794Z" fill="#141414"/>
<rect x="50" y="790" width="352" height="1.5" fill="#888"/>

<!-- status bar -->
<rect y="830" width="1440" height="22" fill="#dcdcdc"/>
<rect y="829" width="1440" height="1" fill="#f2f2f2"/>
<path d="M663.5 831V851M1406.5 831V851" stroke="#f8f8f8"/>
<rect x="1428" y="833" width="12" height="16" fill="#9b9b9b"/>
<text x="-10" y="845" class="b" style="font-size:16px">请使用 <tspan class="l2 b">MB3</tspan>，或双击，或按住并拖动来移动视图、尺寸或注释</text>

<!-- taskbar -->
<rect y="852" width="1440" height="48" fill="url(#task)"/>
<rect y="852" width="1440" height="2" fill="#1c3c5a"/>
<path d="M960 854C1000 858 1060 880 1105 900H1082C1050 880 1000 862 960 854Z" fill="#fff" opacity=".22"/>
<path d="M880 854C920 865 960 880 1000 900H990C950 884 910 868 880 854Z" fill="#fff" opacity=".08"/>
<rect x="0" y="853" width="58" height="47" fill="url(#start)" stroke="#d8e6ee"/>
<circle cx="25" cy="878" r="17" fill="url(#globe)"/>
<path d="M9 890C22 892 40 882 44 866 45 862 41 860 36 859 40 864 36 876 26 882 18 887 12 888 6 888Z" fill="#e2a030"/>
<path d="M7 858L26 857 19 874Z" fill="#d82c40"/>
<!-- tray -->
<g transform="rotate(-12 1235 874)"><rect x="1227" y="866" width="16" height="16" rx="3" fill="#f0b090" stroke="#f4e0d0"/><text x="1235" y="879" class="c b" style="font-family:'Liberation Sans',sans-serif;font-size:13px;fill:#e0501c">S</text></g>
<circle cx="1273" cy="877" r="9" fill="#f0e8e8"/><circle cx="1273" cy="877" r="7" fill="#e04048"/><circle cx="1273" cy="877" r="4.5" fill="#f8f8f8"/>
<ellipse cx="1303" cy="878" rx="6.5" ry="9" fill="#111"/><ellipse cx="1303" cy="881" rx="4.5" ry="5.5" fill="#f4f4f4"/><path d="M1297 876H1309" stroke="#c82020" stroke-width="2.4"/><path d="M1298 886H1302M1304 886H1308" stroke="#e8a020" stroke-width="2"/>
<path d="M1325 877L1337 873 1341 875 1331 882Z" fill="#c8ccd0"/><circle cx="1339" cy="882" r="4.5" fill="#3aa83a" stroke="#d8e8d8"/>
<path d="M1354 874H1358L1364 868V887L1358 881H1354Z" fill="#e8eef4"/><path d="M1367 873C1369 876 1369 879 1367 882M1370 871C1373 875 1373 881 1370 885" fill="none" stroke="#c8d4e0" stroke-width="1.1"/>
<g fill="#f0f4f8"><rect x="1386" y="881" width="2" height="3"/><rect x="1389" y="878" width="2" height="6"/><rect x="1392" y="875" width="2.5" height="9"/><rect x="1396" y="872" width="3" height="12"/></g>
<text x="1438" y="866" style="font-family:'Liberation Sans',sans-serif;font-size:13px;fill:#fff">1</text>
<text x="1416" y="894" style="font-family:'Liberation Sans',sans-serif;font-size:13.5px;fill:#fff">201</text>
</svg>
</body></html>
